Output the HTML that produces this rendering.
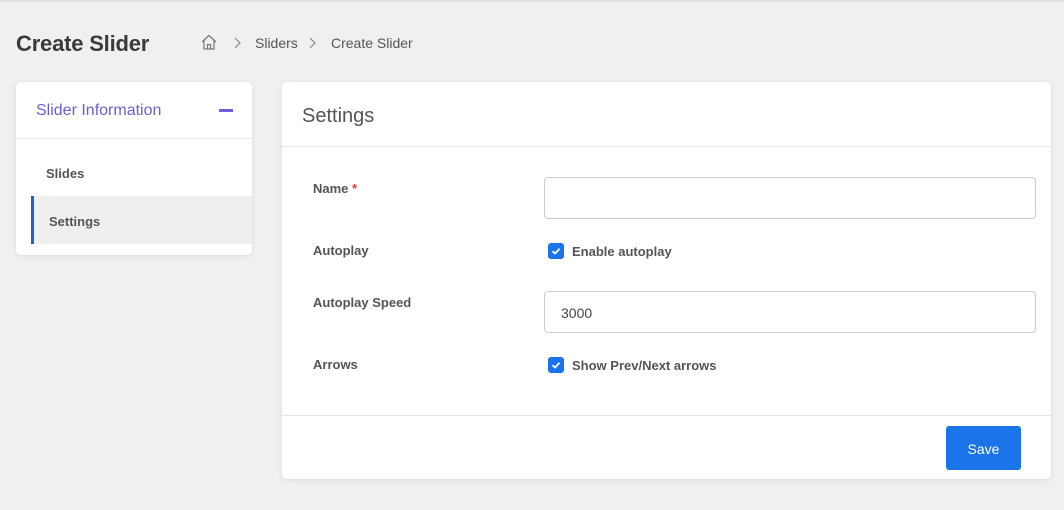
<!DOCTYPE html>
<html><head><style>
*{box-sizing:border-box;margin:0;padding:0}
body{width:1064px;height:510px;background:#f0f0f0;font-family:"Liberation Sans",sans-serif;position:relative;overflow:hidden;color:#444}
.a{position:absolute;white-space:nowrap}
.card{position:absolute;background:#fff;border-radius:5px;box-shadow:0 1px 6px rgba(0,0,0,.08)}
.lbl{position:absolute;left:31px;font-size:13px;font-weight:bold;color:#555}
.inp{position:absolute;left:262px;width:492px;height:42px;border:1px solid #ccc;border-radius:4px;font-size:14px;color:#444;padding:13px 16px}
.cb{position:absolute;left:266px;width:16px;height:16px;background:#1a73e8;border-radius:3px}
.cbl{position:absolute;left:290px;font-size:13px;font-weight:bold;color:#555}
</style></head><body>
<div class="a" style="left:0;top:0;width:1064px;height:2px;background:#e2e2e2"></div>
<div class="a" style="left:16px;top:31px;font-size:22px;font-weight:bold;color:#3a3a3a;letter-spacing:-0.2px">Create Slider</div>
<svg class="a" style="left:200px;top:33px" width="18" height="18" viewBox="0 0 18 18" fill="none" stroke="#777" stroke-width="1.2"><path d="M2 9 L9 2.5 L16 9 M4 7.5 V16 H14 V7.5 M7.5 16 V11.5 H10.5 V16"/></svg>
<svg class="a" style="left:232px;top:37px" width="10" height="12" viewBox="0 0 10 12" fill="none" stroke="#888" stroke-width="1.2"><path d="M3 1 L8 6 L3 11"/></svg>
<div class="a" style="left:255px;top:35px;font-size:14px;color:#555">Sliders</div>
<svg class="a" style="left:307px;top:37px" width="10" height="12" viewBox="0 0 10 12" fill="none" stroke="#888" stroke-width="1.2"><path d="M3 1 L8 6 L3 11"/></svg>
<div class="a" style="left:331px;top:35px;font-size:14px;color:#555">Create Slider</div>

<div class="card" style="left:16px;top:82px;width:236px;height:173px;overflow:hidden">
 <div class="a" style="left:20px;top:20px;font-size:16px;color:#6a5fd8">Slider Information</div>
 <div class="a" style="left:203px;top:27px;width:14px;height:3px;background:#6a5fd8"></div>
 <div class="a" style="left:0;top:56px;width:236px;height:1px;background:#e6e6e6"></div>
 <div class="a" style="left:30px;top:84px;font-size:13px;font-weight:bold;color:#555">Slides</div>
 <div class="a" style="left:15px;top:114px;width:221px;height:48px;background:#efefef;border-left:3px solid #1a63d8"></div>
 <div class="a" style="left:33px;top:132px;font-size:13px;font-weight:bold;color:#555">Settings</div>
</div>

<div class="card" style="left:282px;top:82px;width:769px;height:397px">
 <div class="a" style="left:20px;top:23px;font-size:20px;color:#555">Settings</div>
 <div class="a" style="left:0;top:64px;width:769px;height:1px;background:#e6e6e6"></div>
 <div class="lbl" style="top:99px">Name<span style="color:#e53935"> *</span></div>
 <div class="inp" style="top:95px"></div>
 <div class="lbl" style="top:161px">Autoplay</div>
 <div class="cb" style="top:161px"><svg width="16" height="16" viewBox="0 0 16 16" fill="none" stroke="#fff" stroke-width="1.8"><path d="M4.5 8.2 L7 10.5 L11.5 5.8"/></svg></div>
 <div class="cbl" style="top:162px">Enable autoplay</div>
 <div class="lbl" style="top:213px">Autoplay Speed</div>
 <div class="inp" style="top:209px">3000</div>
 <div class="lbl" style="top:275px">Arrows</div>
 <div class="cb" style="top:275px"><svg width="16" height="16" viewBox="0 0 16 16" fill="none" stroke="#fff" stroke-width="1.8"><path d="M4.5 8.2 L7 10.5 L11.5 5.8"/></svg></div>
 <div class="cbl" style="top:276px">Show Prev/Next arrows</div>
 <div class="a" style="left:0;top:333px;width:769px;height:1px;background:#e6e6e6"></div>
 <div class="a" style="left:664px;top:344px;width:75px;height:44px;background:#1a73e8;border-radius:3px;color:#fff;font-size:14px;text-align:center;line-height:46px">Save</div>
</div>
</body></html>
